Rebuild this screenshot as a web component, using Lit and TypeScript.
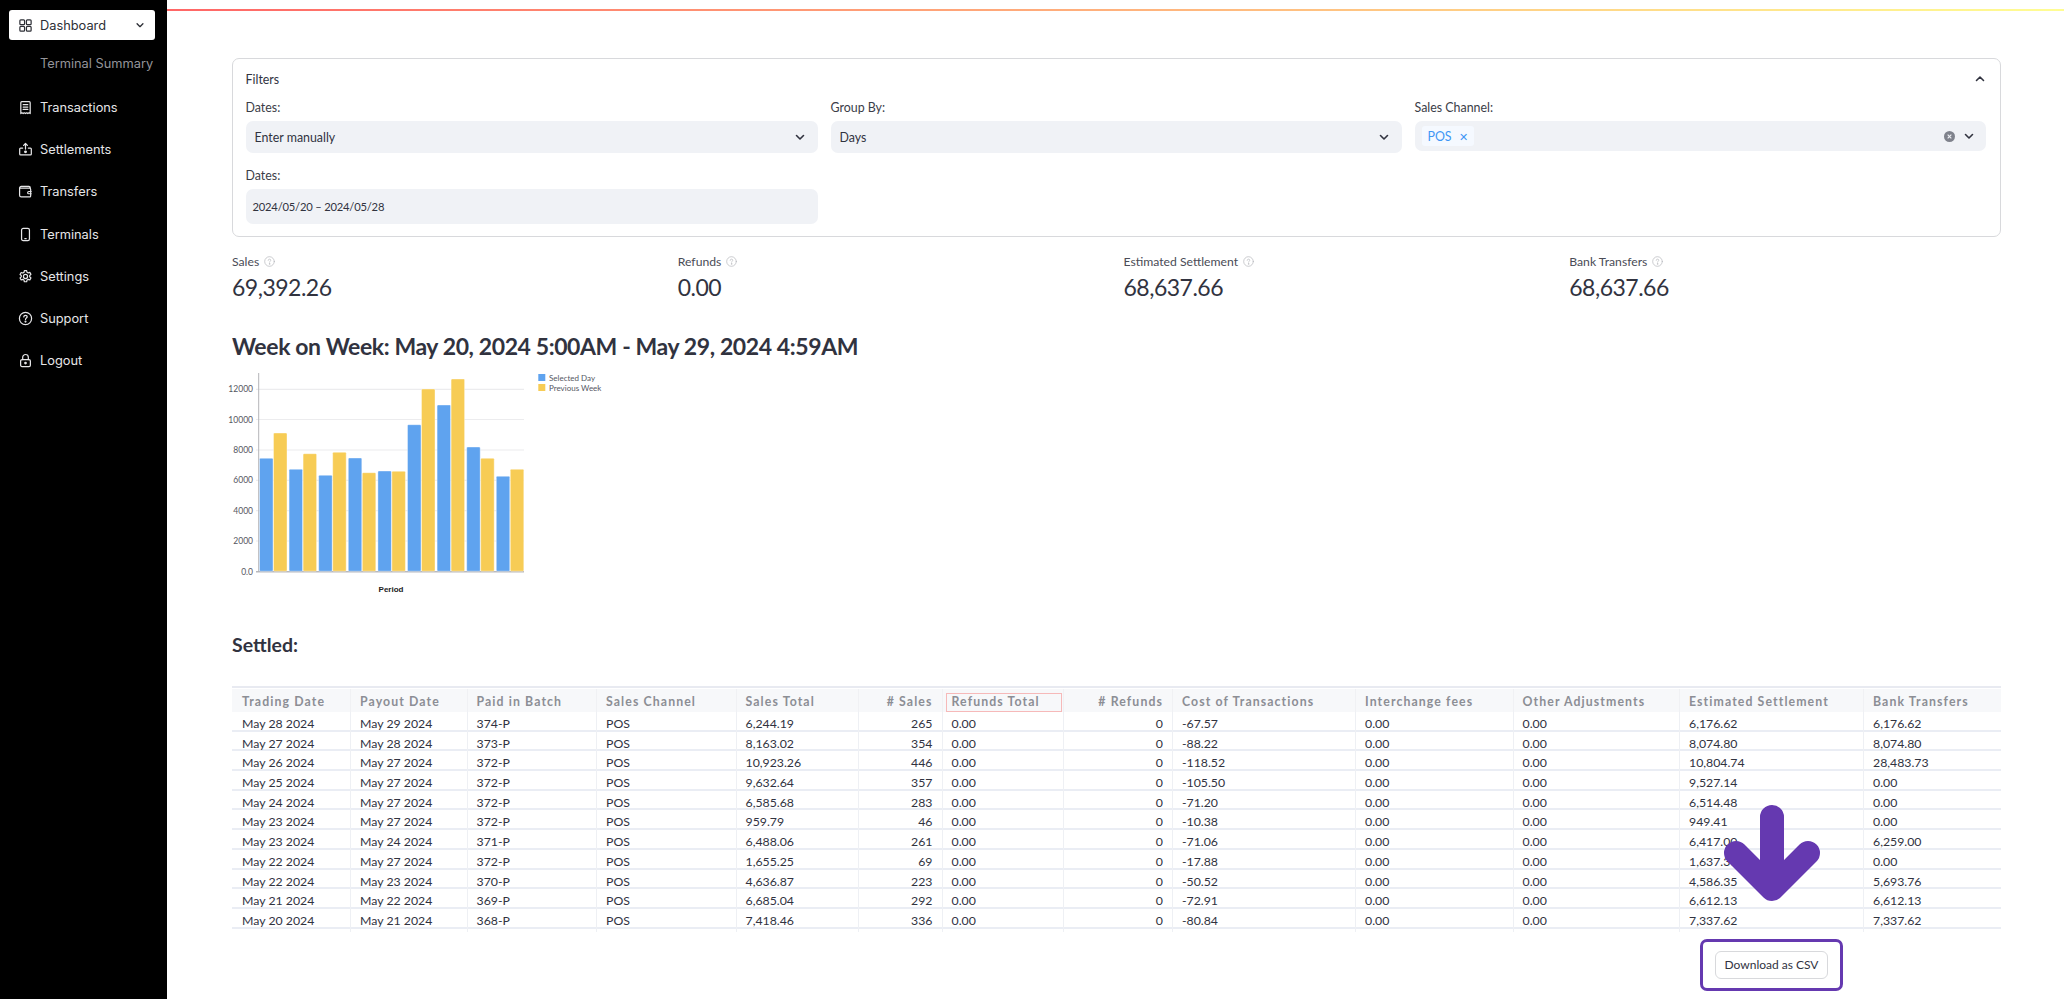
import { LitElement, html, css, svg } from "lit";
import { customElement } from "lit/decorators.js";

const ICONS: Record<string, unknown> = {
  dash: svg`<rect x="2" y="2" width="5" height="5" rx="1"/><rect x="9" y="2" width="5" height="5" rx="1"/><rect x="2" y="9" width="5" height="5" rx="1"/><rect x="9" y="9" width="5" height="5" rx="1"/>`,
  receipt: svg`<path d="M3 14.500V2.800c0-.6.4-1 1-1h8c.6 0 1 .4 1 1v11.700l-1.200-.9-1.300.9-1.200-.9-1.300.9-1.300-.9-1.200.9-1.300-.9z"/><path d="M5.500 5h5M5.500 7.500h5M5.500 10h5"/>`,
  settle: svg`<path d="M5 6.500H2.800c-.6 0-1 .4-1 1v5.200c0 .6.4 1 1 1h10.400c.6 0 1-.4 1-1V7.500c0-.6-.4-1-1-1H11"/><path d="M8 7.500V1.800M6 3.600l2-2 2 2"/><circle cx="8" cy="10.500" r=".9" fill="currentColor"/>`,
  wallet: svg`<path d="M13 4.500V3.800c0-.8-.6-1.300-1.300-1.300H3.500c-1 0-1.800.8-1.800 1.800v7.700c0 1 .8 1.800 1.800 1.800h9c.6 0 1-.4 1-1V5.800c0-.7-.5-1.300-1.200-1.300H2"/><path d="M14 8h-2.500a1.200 1.200 0 0 0 0 2.400H14"/>`,
  phone: svg`<rect x="3.800" y="1.500" width="8.400" height="13" rx="1.800"/><path d="M7.300 12.500h1.400"/>`,
  gear: svg`<circle cx="8" cy="8" r="2.200"/><path d="M6.800 1.700h2.400l.4 1.800 1.300.7 1.700-.6 1.200 2.100-1.300 1.200v1.500l1.300 1.200-1.200 2.100-1.700-.6-1.300.7-.4 1.800H6.800l-.4-1.800-1.300-.7-1.700.6-1.200-2.100 1.300-1.200V7l-1.300-1.200 1.200-2.100 1.700.6 1.300-.7z" stroke-linejoin="round"/>`,
  help: svg`<circle cx="8" cy="8" r="6.500"/><path d="M6.200 6.300c0-1 .8-1.700 1.800-1.700s1.800.7 1.800 1.600c0 1.300-1.800 1.400-1.800 2.800"/><circle cx="8" cy="11.300" r=".5" fill="currentColor"/>`,
  lock: svg`<rect x="2.800" y="7" width="10.400" height="7.500" rx="1.500"/><path d="M5 7V4.600a3 3 0 0 1 6 0V7"/><circle cx="8" cy="10.700" r=".8" fill="currentColor"/>`,
};

const icon = (n: string) =>
  html`<svg class="nav-ic" viewBox="0 0 16 16" fill="none" stroke="currentColor" stroke-width="1.300" stroke-linecap="round" stroke-linejoin="round">${ICONS[n]}</svg>`;

const chevDown = html`<svg class="chev" viewBox="0 0 12 12" fill="none" stroke="currentColor" stroke-width="1.600" stroke-linecap="round" stroke-linejoin="round"><path d="M2.500 4.500 6 8l3.500-3.500"/></svg>`;

const helpIc = html`<svg class="hlp" viewBox="0 0 16 16" fill="none" stroke="currentColor" stroke-width="1" stroke-linecap="round"><circle cx="8" cy="8" r="7"/><path d="M6.100 6.300c0-1 .8-1.700 1.900-1.700s1.900.7 1.900 1.600c0 1.300-1.900 1.400-1.900 2.800"/><circle cx="8" cy="11.500" r=".4" fill="currentColor"/></svg>`;

const NAV = [
  ["receipt", "Transactions"],
  ["settle", "Settlements"],
  ["wallet", "Transfers"],
  ["phone", "Terminals"],
  ["gear", "Settings"],
  ["help", "Support"],
  ["lock", "Logout"],
];

const METRICS = [
  ["Sales", "69,392.26"],
  ["Refunds", "0.00"],
  ["Estimated Settlement", "68,637.66"],
  ["Bank Transfers", "68,637.66"],
];

const HEAD = [
  "Trading Date", "Payout Date", "Paid in Batch", "Sales Channel", "Sales Total", "# Sales",
  "Refunds Total", "# Refunds", "Cost of Transactions", "Interchange fees", "Other Adjustments",
  "Estimated Settlement", "Bank Transfers",
];

const ROWS = [
  ["May 28 2024", "May 29 2024", "374-P", "POS", "6,244.19", "265", "0.00", "0", "-67.57", "0.00", "0.00", "6,176.62", "6,176.62"],
  ["May 27 2024", "May 28 2024", "373-P", "POS", "8,163.02", "354", "0.00", "0", "-88.22", "0.00", "0.00", "8,074.80", "8,074.80"],
  ["May 26 2024", "May 27 2024", "372-P", "POS", "10,923.26", "446", "0.00", "0", "-118.52", "0.00", "0.00", "10,804.74", "28,483.73"],
  ["May 25 2024", "May 27 2024", "372-P", "POS", "9,632.64", "357", "0.00", "0", "-105.50", "0.00", "0.00", "9,527.14", "0.00"],
  ["May 24 2024", "May 27 2024", "372-P", "POS", "6,585.68", "283", "0.00", "0", "-71.20", "0.00", "0.00", "6,514.48", "0.00"],
  ["May 23 2024", "May 27 2024", "372-P", "POS", "959.79", "46", "0.00", "0", "-10.38", "0.00", "0.00", "949.41", "0.00"],
  ["May 23 2024", "May 24 2024", "371-P", "POS", "6,488.06", "261", "0.00", "0", "-71.06", "0.00", "0.00", "6,417.00", "6,259.00"],
  ["May 22 2024", "May 27 2024", "372-P", "POS", "1,655.25", "69", "0.00", "0", "-17.88", "0.00", "0.00", "1,637.37", "0.00"],
  ["May 22 2024", "May 23 2024", "370-P", "POS", "4,636.87", "223", "0.00", "0", "-50.52", "0.00", "0.00", "4,586.35", "5,693.76"],
  ["May 21 2024", "May 22 2024", "369-P", "POS", "6,685.04", "292", "0.00", "0", "-72.91", "0.00", "0.00", "6,612.13", "6,612.13"],
  ["May 20 2024", "May 21 2024", "368-P", "POS", "7,418.46", "336", "0.00", "0", "-80.84", "0.00", "0.00", "7,337.62", "7,337.62"],
];

const RIGHT = new Set([5, 7]);

/* Bar tops in page pixels, baseline at y = 571.7 */
const BLUE = [458.3, 469.3, 475.3, 458, 471, 424.7, 405, 447, 476.3];
const GOLD = [433, 453.7, 452.3, 472.7, 471.3, 389, 379, 458.3, 469.3];
const TICKS = [
  ["12000", 389.3], ["10000", 419.5], ["8000", 450], ["6000", 480.3], ["4000", 510.7], ["2000", 541], ["0.0", 571.7],
] as const;

const chart = svg`
  ${TICKS.map(([t, y]) => svg`
    <line x1="256" x2="524" y1=${y} y2=${y} stroke=${y > 571 ? "#b9b9bd" : "#ececee"} stroke-width=${y > 571 ? 1.5 : 1.2}></line>
    <text x="253" y=${(y as number) + 3} text-anchor="end" class="tick">${t}</text>`)}
  <line x1="258.700" x2="258.700" y1="373" y2="572" stroke="#b4b4b8" stroke-width="1"></line>
  ${BLUE.map((top, i) => {
    const x = 259.5 + i * 29.6;
    return svg`
      <rect x=${x} y=${top} width="13.500" height=${571.2 - top} rx="1" fill="#5fa3ef" stroke="#fff" stroke-opacity=".55" stroke-width=".7"></rect>
      <rect x=${x + 14} y=${GOLD[i]} width="13.500" height=${571.2 - GOLD[i]} rx="1" fill="#f7cc55" stroke="#fff" stroke-opacity=".55" stroke-width=".7"></rect>`;
  })}
  <rect x="538.300" y="374" width="7" height="7" fill="#5fa3ef"></rect>
  <rect x="538.300" y="384" width="7" height="7" fill="#f7cc55"></rect>
  <text x="549" y="380.500" class="leg">Selected Day</text>
  <text x="549" y="390.500" class="leg">Previous Week</text>
  <text x="391" y="591.500" text-anchor="middle" class="per">Period</text>
`;

@customElement("app-root")
export class AppRoot extends LitElement {
  static styles = css`
    :host {
      display: flex;
      width: 2064px;
      height: 999px;
      overflow: hidden;
      background: #fff;
      color: #31333f;
      font-family: "Lato", "Liberation Sans", sans-serif;
    }
    .side {
      flex: 0 0 167px;
      background: #000;
      color: #e6e6e8;
      font-family: "Inter", "Liberation Sans", sans-serif;
      font-size: 12.800px;
      padding-top: 10px;
      box-sizing: border-box;
    }
    .active {
      display: flex;
      align-items: center;
      margin: 0 12px 0 9px;
      height: 30px;
      background: #fff;
      color: #2d2f36;
      border-radius: 3px;
      padding-left: 8.500px;
    }
    .active .chev { width: 10px; height: 10px; margin-left: auto; margin-right: 10px; }
    .nav-ic { width: 15px; height: 15px; flex: none; margin-right: 7.500px; }
    .sub {
      height: 20px;
      line-height: 20px;
      margin: 14px 0 12px 40px;
      color: #94949a;
    }
    .item {
      display: flex;
      align-items: center;
      height: 42.300px;
      padding-left: 17.500px;
    }
    .main {
      flex: 1;
      min-width: 0;
      padding: 0 63px 0 65px;
      box-sizing: border-box;
      position: relative;
    }
    .grad {
      height: 2px;
      margin: 9px -63px 0 -65px;
      background: linear-gradient(90deg, #ff4b4b, #fffd80);
      opacity: .85;
    }
    .filters {
      margin-top: 47px;
      border: 1.500px solid #d8d9dc;
      border-radius: 7px;
      height: 179px;
      box-sizing: border-box;
      padding: 0 12.500px;
      font-size: 12.400px;
    }
    .f-head {
      display: flex;
      justify-content: space-between;
      align-items: center;
      height: 40px;
      padding-right: 2px;
    }
    .f-head .chev { width: 12px; height: 12px; transform: rotate(180deg); }
    .f-grid {
      display: grid;
      grid-template-columns: 572px 571px 571px;
      column-gap: 13px;
    }
    .lab { height: 18px; line-height: 18px; margin-bottom: 4px; color: #3b3d48; }
    .sel {
      height: 32px;
      border-radius: 7px;
      background: #f0f2f6;
      display: flex;
      align-items: center;
      padding: 0 12px 0 9px;
      color: #31333f;
    }
    .sel .chev { width: 12px; height: 12px; margin-left: auto; }
    .multi { height: 30px; padding: 0 11px 0 7px; }
    .chip {
      display: flex;
      align-items: center;
      gap: 7px;
      height: 20px;
      padding: 0 6px;
      border-radius: 3px;
      background: #f5f9ff;
      color: #3f96f5;
    }
    .x { font-size: 11px; line-height: 1; }
    .clear { width: 11px; height: 11px; margin-left: auto; margin-right: 7.500px; }
    .sel.multi .chev { margin-left: 0; }
    .date-wrap { margin-top: 14px; }
    .date {
      height: 35px;
      border-radius: 7px;
      background: #f0f2f6;
      display: flex;
      align-items: center;
      padding-left: 7px;
      font-size: 11.200px;
      letter-spacing: -0.2px;
    }
    .metrics {
      display: grid;
      grid-template-columns: repeat(4, 1fr);
      column-gap: 14px;
      margin-top: 15px;
    }
    .m-lab {
      display: flex;
      align-items: center;
      gap: 5px;
      height: 18px;
      font-size: 12.200px;
      color: #4a4c56;
    }
    .hlp { width: 11px; height: 11px; color: #b5b6bb; }
    .m-val { height: 34px; line-height: 34px; font-size: 23px; letter-spacing: -0.5px; }
    h2 {
      margin: 24px 0 0;
      height: 36px;
      line-height: 36px;
      font-size: 23px;
      font-weight: 700;
      letter-spacing: -0.4px;
      white-space: nowrap;
    }
    .chart { display: block; width: 320px; height: 236px; overflow: visible; }
    .tick { font: 8.500px "Lato", sans-serif; fill: #55575f; }
    .leg { font: 8px "Lato", sans-serif; fill: #55575f; }
    .per { font: bold 8px "Liberation Sans", sans-serif; fill: #222; }
    h3 {
      margin: 30px 0 26px;
      height: 30px;
      line-height: 30px;
      font-size: 19.500px;
      font-weight: 700;
    }
    .table { border-top: 2px solid #e8eaf1; padding-top: 1px; }
    .row {
      display: grid;
      grid-template-columns: 118px 116.500px 129.500px 139.500px 122px 84px 121.500px 109px 183px 157.500px 166.500px 184px 138px;
      height: 19.700px;
      box-sizing: border-box;
      border-bottom: 2px solid #eaedf4;
      font-size: 12.300px;
    }
    .cell {
      border-left: 1px solid #eef0f4;
      padding: 0 9px;
      line-height: 23px;
      white-space: nowrap;
      position: relative;
    }
    .cell:first-child { border-left: 0; padding-left: 10px; }
    .right { text-align: right; }
    .head {
      height: 23px;
      background: #f7f8fa;
      border-bottom: 0;
      font-size: 12.300px;
      font-weight: 700;
      letter-spacing: 1.100px;
      color: #8c8e95;
    }
    .head .cell { line-height: 26px; border-left-color: #f0f1f4; }
    .mark {
      position: absolute;
      left: 3.500px;
      right: 1px;
      top: 3.500px;
      bottom: 3px;
      border: 1.500px solid #f6b9b9;
    }
    .dl {
      display: flex;
      justify-content: flex-end;
      padding-right: 173px;
      margin-top: 22px;
    }
    .btn-wrap { position: relative; }
    .btn {
      display: block;
      width: 113px;
      height: 28px;
      box-sizing: border-box;
      border: 1px solid #d8d9dc;
      border-radius: 6px;
      background: #fff;
      padding: 0;
      font: 12px "Lato", sans-serif;
      color: #31333f;
    }
    .ring {
      position: absolute;
      inset: -12px -15px;
      border: 3.500px solid #6539b0;
      border-radius: 7px;
    }
    .arrow {
      position: absolute;
      left: 9px;
      top: -146px;
      width: 96px;
      height: 96px;
    }
  `;

  render() {
    return html`
      <aside class="side">
        <div class="active">${icon("dash")}<span>Dashboard</span>${chevDown}</div>
        <div class="sub">Terminal Summary</div>
        ${NAV.map(([i, t]) => html`<div class="item">${icon(i)}<span>${t}</span></div>`)}
      </aside>
      <main class="main">
        <div class="grad"></div>
        <section class="filters">
          <div class="f-head"><span>Filters</span>${chevDown}</div>
          <div class="f-grid">
            <div><div class="lab">Dates:</div><div class="sel">Enter manually ${chevDown}</div></div>
            <div><div class="lab">Group By:</div><div class="sel">Days ${chevDown}</div></div>
            <div>
              <div class="lab">Sales Channel:</div>
              <div class="sel multi">
                <span class="chip">POS <span class="x">✕</span></span>
                <svg class="clear" viewBox="0 0 12 12"><circle cx="6" cy="6" r="6" fill="#7f828c"></circle><path d="M4 4l4 4M8 4l-4 4" stroke="#f0f2f6" stroke-width="1.200"></path></svg>
                ${chevDown}
              </div>
            </div>
          </div>
          <div class="date-wrap f-grid">
            <div><div class="lab">Dates:</div><div class="date">2024/05/20 – 2024/05/28</div></div>
          </div>
        </section>
        <section class="metrics">
          ${METRICS.map(([l, v]) => html`<div><div class="m-lab">${l} ${helpIc}</div><div class="m-val">${v}</div></div>`)}
        </section>
        <h2>Week on Week: May 20, 2024 5:00AM - May 29, 2024 4:59AM</h2>
        <svg class="chart" viewBox="232 364 320 236">${chart}</svg>
        <h3>Settled:</h3>
        <div class="table">
          <div class="row head">
            ${HEAD.map((h, i) => html`<div class="cell ${RIGHT.has(i) ? "right" : ""}">${h}${i === 6 ? html`<span class="mark"></span>` : ""}</div>`)}
          </div>
          ${ROWS.map((r) => html`<div class="row">${r.map((c, i) => html`<div class="cell ${RIGHT.has(i) ? "right" : ""}">${c}</div>`)}</div>`)}
        </div>
        <div class="dl">
          <div class="btn-wrap">
            <button class="btn">Download as CSV</button>
            <div class="ring"></div>
            <svg class="arrow" viewBox="0 0 96 96" fill="none" stroke="#6539b0" stroke-width="24" stroke-linecap="round" stroke-linejoin="round"><path d="M48 12V84M12 48 48 84 84 48"></path></svg>
          </div>
        </div>
      </main>
    `;
  }
}
